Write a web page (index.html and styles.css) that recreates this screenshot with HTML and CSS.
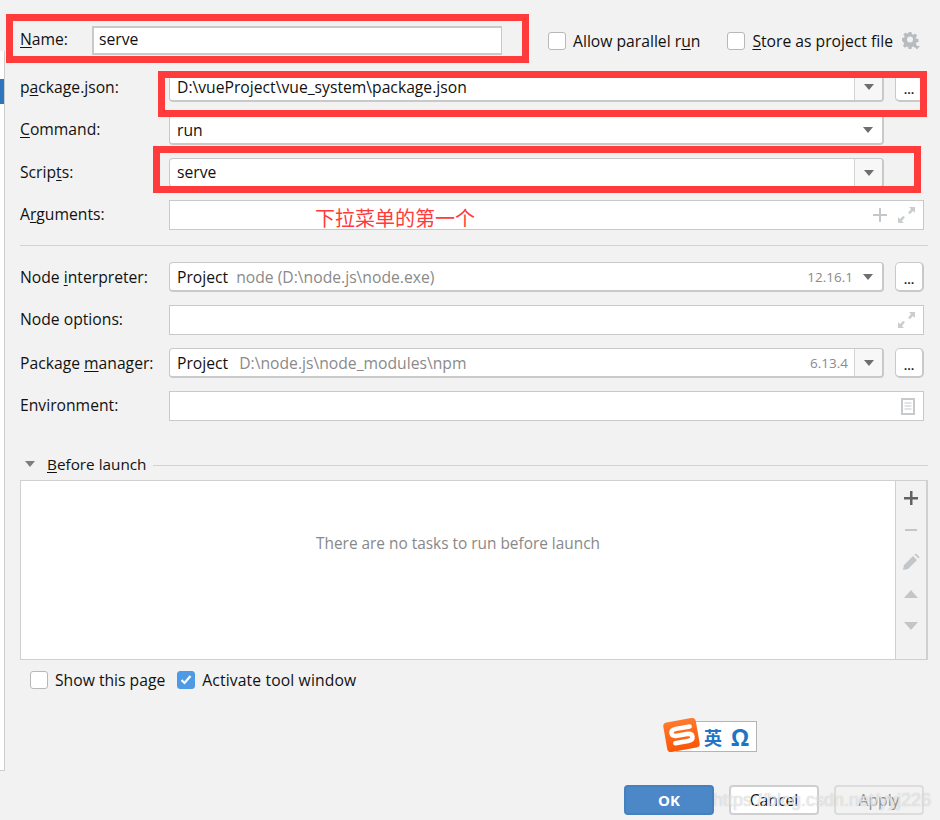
FILE: index.html
```html
<!DOCTYPE html>
<html lang="en">
<head>
<meta charset="utf-8">
<title>Run configuration</title>
<link rel="stylesheet" href="styles.css">
</head>
<body>
<div class="dialog">
  <div class="side-edge"></div>
  <div class="side-mark"></div>

  <header class="top-row">
    <label class="name-label"><u>N</u>ame:</label>
    <div class="field name-field">serve</div>
    <label class="check first-check"><span class="box"></span><span>Allow parallel r<u>u</u>n</span></label>
    <label class="check second-check"><span class="box"></span><span><u>S</u>tore as project file</span></label>
    <svg class="gear" width="18" height="19" viewBox="0 0 18 19"><path fill="#b9bcbe" fill-rule="evenodd" d="M6.500 1h3l.4 2.200 1.300.6 1.900-1.300 2 2-1.300 1.900.6 1.300 2.100.4v3l-2.100.4-.6 1.300 1.300 1.900-2 2-1.900-1.300-1.300.6-.4 2.100h-3l-.4-2.100-1.300-.6-1.900 1.300-2-2 1.300-1.900-.6-1.300L0 10V7l2.100-.4.6-1.300-1.300-1.900 2-2 1.900 1.300 1.300-.6zM8 5.500a3 3 0 1 0 0 6 3 3 0 0 0 0-6z"/><path fill="#b9bcbe" d="M12 15h6l-3 3.500z"/></svg>
  </header>

  <section class="form form-a">
    <label class="label low">p<u>a</u>ckage.json:</label>
    <div class="combo"><span class="value low">D:\vueProject\vue_system\package.json</span><span class="arrow-cell"><i class="arrow"></i></span></div>
    <button class="more">...</button>

    <label class="label"><u>C</u>ommand:</label>
    <div class="combo wide"><span class="value low">run</span><span class="arrow-cell plain"><i class="arrow"></i></span></div>

    <label class="label">Scrip<u>t</u>s:</label>
    <div class="combo wide"><span class="value">serve</span><span class="arrow-cell"><i class="arrow"></i></span></div>

    <label class="label args-label">A<u>r</u>guments:</label>
    <div class="field span2 args-field">
      <svg width="14" height="14" viewBox="0 0 14 14"><path fill="#c4c8ca" d="M6 0h2v6h6v2H8v6H6V8H0V6h6z"/></svg>
      <svg width="17" height="16" viewBox="0 0 17 16"><path fill="#c9cdcf" d="M11 0h6v6l-2-2-3 3-2-1 3-4zM0 16v-6l2 2 3-3 2 1-3 4 2 2z"/></svg>
    </div>
  </section>

  <div class="separator"></div>

  <section class="form form-b">
    <label class="label low">Node <u>i</u>nterpreter:</label>
    <div class="combo"><span class="value low">Project<span class="hint first-hint">node (D:\node.js\node.exe)</span></span><span class="version near">12.16.1</span><span class="arrow-cell plain"><i class="arrow"></i></span></div>
    <button class="more">...</button>

    <label class="label">Node options:</label>
    <div class="field span2"><svg width="17" height="16" viewBox="0 0 17 16"><path fill="#c9cdcf" d="M11 0h6v6l-2-2-3 3-2-1 3-4zM0 16v-6l2 2 3-3 2 1-3 4 2 2z"/></svg></div>

    <label class="label low">Package <u>m</u>anager:</label>
    <div class="combo"><span class="value low">Project<span class="hint second-hint">D:\node.js\node_modules\npm</span></span><span class="version">6.13.4</span><span class="arrow-cell"><i class="arrow"></i></span></div>
    <button class="more">...</button>

    <label class="label">Environment:</label>
    <div class="field span2"><svg class="doc" width="14" height="17" viewBox="0 0 14 17"><path fill="#c6cacc" fill-rule="evenodd" d="M0 0h14v17H0zM2 2v13h10V2z"/><path fill="#c6cacc" d="M3.500 4.500h7v1h-7zM3.500 7.500h7v1h-7zM3.500 10.500h7v1h-7z"/></svg></div>
  </section>

  <div class="before-head">
    <i class="arrow before-arrow"></i>
    <span class="before-title"><u>B</u>efore launch</span>
    <span class="before-line"></span>
  </div>

  <section class="tasks">
    <div class="task-list">There are no tasks to run before launch</div>
    <aside class="toolbar">
      <svg width="14" height="14" viewBox="0 0 14 14"><path fill="#5f6366" d="M6 0h2.500v6H14v2.500H8.500V14H6V8.500H0V6h6z"/></svg>
      <svg width="14" height="14" viewBox="0 0 14 14"><path fill="#c2c6c8" d="M1 6h12v2H1z"/></svg>
      <svg width="18" height="18" viewBox="0 0 18 18"><path fill="#c2c6c8" d="M1 17l1-5L11 3l4 4-9 9zM12.500 1.500l1.500-1 3.500 3.500-1 1.500z"/></svg>
      <svg width="16" height="8" viewBox="0 0 16 8"><path fill="#c2c6c8" d="M8 0l7 8H1z"/></svg>
      <svg width="16" height="8" viewBox="0 0 16 8"><path fill="#c2c6c8" d="M1 0h14L8 8z"/></svg>
    </aside>
  </section>

  <div class="options">
    <label class="check"><span class="box"></span><span>Show this page</span></label>
    <label class="check"><span class="box checked"><svg width="12" height="10" viewBox="0 0 12 10"><path fill="none" stroke="#fff" stroke-width="2.200" d="M1.500 5l3 3 6-7"/></svg></span><span class="activate">Activate tool window</span></label>
  </div>

  <footer class="buttons">
    <button class="btn ok">OK</button>
    <button class="btn">Cancel</button>
    <button class="btn disabled">Apply</button>
  </footer>
</div>

<div class="mark mark-name"></div>
<div class="mark mark-package"></div>
<div class="mark mark-scripts"></div>
<div class="note">下拉菜单的第一个</div>

<div class="ime">
  <span class="ime-logo"><svg width="26" height="22" viewBox="0 0 26 22"><path fill="none" stroke="#fff" stroke-width="4.500" stroke-linecap="round" stroke-linejoin="round" d="M22 4H8Q3 4 3 7.500T8 11h10q5 0 5 3.500T18 18H5"/></svg></span>
  <span class="ime-text">英</span>
  <span class="ime-text omega">Ω</span>
</div>

<div class="watermark">https://blog.csdn.net/yyj226</div>
</body>
</html>
```

FILE: styles.css
```css
* { box-sizing: border-box; }

html, body {
  margin: 0;
  height: 820px;
  overflow: hidden;
}

body {
  position: relative;
  background: #f2f2f2;
  color: #111;
  font: 15.7px/20px "Open Sans", "Noto Sans", sans-serif;
}

u { text-underline-offset: 2px; }

.dialog {
  width: 940px;
  height: 820px;
  padding: 26px 16px 0 20px;
}

.side-edge {
  position: absolute;
  left: 0;
  top: 51px;
  width: 5px;
  height: 720px;
  background: #fff;
  border-right: 1px solid #cdcdcd;
  border-bottom: 1px solid #cdcdcd;
}

.side-mark {
  position: absolute;
  left: 0;
  top: 79px;
  width: 4px;
  height: 25px;
  background: #2f75bd;
}

.top-row {
  display: flex;
  align-items: center;
  height: 28px;
}

.name-label {
  flex: none;
  width: 72px;
  padding-bottom: 2px;
}

.field {
  display: flex;
  align-items: center;
  justify-content: flex-end;
  gap: 11px;
  height: 30px;
  padding: 0 8px 0 7px;
  background: #fff;
  border: 1px solid #c9c9c9;
}

.name-field {
  flex: none;
  justify-content: flex-start;
  width: 410px;
  height: 29px;
  padding: 0 5px 3px;
  border-width: 2px 1px 2px 2px;
}

.check {
  display: flex;
  flex: none;
  align-items: center;
  gap: 7px;
  white-space: nowrap;
}

.first-check { margin: 2px 0 0 46px; }
.second-check { margin: 2px 0 0 27px; }
.gear { flex: none; margin: 1px 0 0 9px; }

.box {
  display: flex;
  align-items: center;
  justify-content: center;
  width: 18px;
  height: 18px;
  background: #fff;
  border: 1px solid #b8b8b8;
  border-radius: 3px;
}

.box.checked {
  background: #4f9ae4;
  border-color: #4f9ae4;
}

.activate { letter-spacing: 0.13px; }

.form {
  display: grid;
  grid-template-columns: 149px 715px 40px;
  grid-auto-rows: 30px;
  row-gap: 13px;
  align-items: center;
}

.form-a { margin-top: 18px; }
.form-b { margin-top: 16px; }

.label { padding-bottom: 2px; white-space: nowrap; }
.args-label { margin-top: -3px; }
.args-field { margin-top: -2px; }

.span2 { grid-column: span 2; width: 755px; }

.combo {
  display: flex;
  align-items: center;
  height: 30px;
  background: #fff;
  border: 1px solid #c9c9c9;
  border-width: 1px 2px 2px 1px;
  border-radius: 4px;
}

.wide { grid-column: span 2; width: 715px; }

.value {
  flex: 1;
  padding: 0 0 2px 7px;
  white-space: nowrap;
}

.value.low { padding-bottom: 0; }
.label.low { padding-bottom: 0; }

.hint { color: #8a8a8a; }
.first-hint { margin-left: 8px; }
.second-hint { margin-left: 11px; }

.version {
  margin-right: 6px;
  color: #8a8a8a;
  font-size: 13.500px;
}

.version.near { margin-right: 1px; }

.arrow-cell {
  display: flex;
  align-items: center;
  justify-content: center;
  align-self: stretch;
  width: 28px;
  background: #f7f7f7;
  border-left: 1px solid #d4d4d4;
  border-radius: 0 3px 3px 0;
}

.arrow-cell.plain {
  background: #fff;
  border-left: 0;
}

.arrow {
  display: block;
  width: 0;
  height: 0;
  border-style: solid;
  border-width: 6px 5.500px 0;
  border-color: #6e6e6e transparent transparent;
}

.more {
  justify-self: end;
  width: 29px;
  height: 30px;
  padding: 5px 0 0;
  background: #fff;
  border: 1px solid #c9c9c9;
  border-width: 1px 2px 2px 1px;
  border-radius: 5px;
  color: #111;
  font: 600 13px/20px "Open Sans", sans-serif;
}

.separator {
  height: 1px;
  margin: 14px -4px 0 0;
  background: #d2d2d2;
}

.before-head {
  display: flex;
  align-items: center;
  height: 20px;
  margin: 33px -4px 0 0;
}

.before-arrow {
  margin-left: 5px;
  border-color: #7d7d7d transparent transparent;
}

.before-title {
  margin-left: 12px;
  font-size: 15.300px;
}

.before-line {
  flex: 1;
  height: 1px;
  margin: 2px 0 0 7px;
  background: #d2d2d2;
}

.tasks {
  display: flex;
  width: 908px;
  height: 180px;
  margin-top: 6px;
  border: 1px solid #d0d0d0;
  border-right-width: 0;
}

.task-list {
  display: flex;
  flex: 1;
  align-items: center;
  justify-content: center;
  padding: 0 0 52px;
  background: #fff;
  color: #888;
  font-size: 15.400px;
  border-right: 1px solid #d0d0d0;
}

.toolbar {
  display: grid;
  grid-auto-rows: 32px;
  align-items: center;
  justify-items: center;
  width: 32px;
  padding-top: 1px;
  background: #f2f2f2;
  border-right: 2px solid #d0d0d0;
}

.options {
  display: flex;
  gap: 12px;
  margin: 10px 0 0 10px;
}

.buttons {
  display: flex;
  justify-content: flex-end;
  gap: 15px;
  width: 904px;
  margin-top: 95px;
}

.btn {
  width: 90px;
  height: 30px;
  padding: 0;
  background: #fff;
  border: 2px solid #cfcfcf;
  border-radius: 4px;
  color: #111;
  font: 15.7px/20px "Open Sans", sans-serif;
}

.btn.ok {
  background: #4c88c8;
  border-color: #4580bf;
  color: #fff;
  font-weight: 700;
  font-size: 15px;
}

.btn.disabled {
  background: #f2f2f2;
  border-color: #dcdcdc;
  color: #8e8e8e;
}

.mark {
  position: absolute;
  border: 7px solid #ff3b3b;
}

.mark-name { left: 6px; top: 14px; width: 523px; height: 49px; }
.mark-package { left: 158px; top: 71px; width: 769px; height: 46px; }
.mark-scripts { left: 153px; top: 146px; width: 768px; height: 47px; }

.note {
  position: absolute;
  left: 315px;
  top: 205px;
  color: #ff3b3b;
  font: 20px/26px "Noto Sans CJK SC", sans-serif;
}

.ime {
  position: absolute;
  left: 676px;
  top: 721px;
  display: flex;
  align-items: center;
  width: 81px;
  height: 31px;
  padding-left: 27px;
  background: #fff;
  border: 1px solid #b4b4b4;
  color: #1f74c4;
}

.ime-logo {
  position: absolute;
  left: -12px;
  top: -2px;
  display: flex;
  align-items: center;
  justify-content: center;
  width: 33px;
  height: 30px;
  background: linear-gradient(180deg, #ff7a2e, #fb5606);
  border-radius: 4px;
  transform: rotate(-10deg);
}

.ime-text {
  font: 700 18px/24px "Noto Sans CJK SC", sans-serif;
}

.omega {
  margin-left: 9px;
  font: 700 23px/24px "Open Sans", sans-serif;
}

.watermark {
  position: absolute;
  left: 713px;
  top: 790px;
  color: rgba(255, 255, 255, 0.65);
  text-shadow: 0 0 1px rgba(120, 120, 120, 0.5);
  font: 18px/20px "Liberation Sans", sans-serif;
  white-space: nowrap;
  pointer-events: none;
}
```
